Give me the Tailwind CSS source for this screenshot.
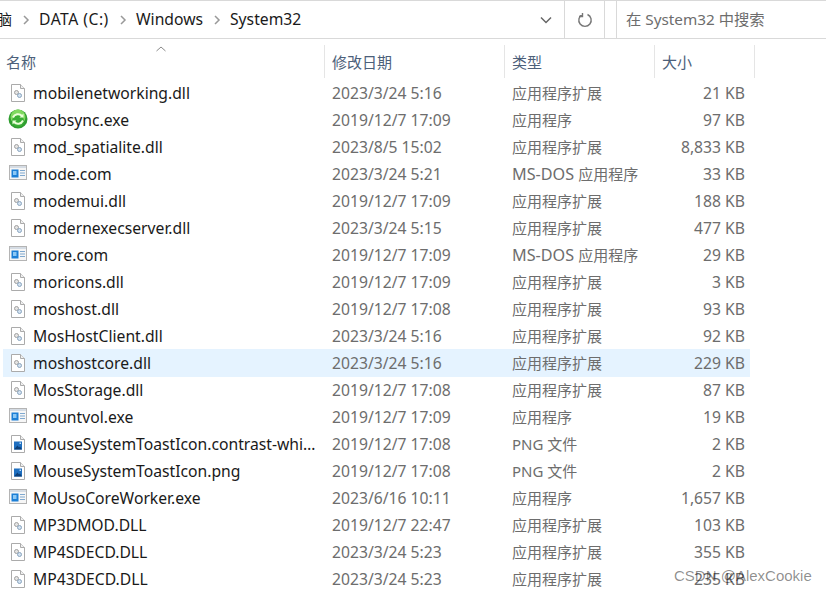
<!DOCTYPE html>
<html lang="zh-CN">
  <head>
    <meta charset="UTF-8" />
    <title>System32</title>
    <script src="https://cdn.jsdelivr.net/npm/@tailwindcss/browser@4"></script>
  </head>
  <body class="bg-white h-[591px] overflow-hidden relative text-[15.7px] text-[#1a1a1a] font-['Noto_Sans','Noto_Sans_CJK_SC',sans-serif]">
    <!-- icon defs -->
    <svg class="absolute w-0 h-0">
      <defs>
        <symbol id="dll" viewBox="0 1 20 20">
          <path d="M3.500 1.500h9l4 4v13h-13z" fill="#fff" stroke="#ababab" />
          <path d="M12.500 1.500v4h4" fill="#f0f0f0" stroke="#ababab" />
          <circle cx="8.500" cy="9.500" r="2" fill="#e4e4e4" stroke="#a0a0a0" />
          <circle cx="11.500" cy="12.500" r="2" fill="#d3e2f0" stroke="#8aa5bf" />
        </symbol>
        <symbol id="app" viewBox="0 2 20 20">
          <rect x="1.500" y="2.500" width="17" height="14" fill="#f6f6f6" stroke="#b4b4b4" />
          <rect x="2" y="3" width="16" height="2" fill="#d5dce4" />
          <rect x="3.500" y="6.500" width="7" height="8" fill="#1c7fd6" />
          <rect x="5" y="8" width="3.500" height="4" fill="#8cc8f5" />
          <path d="M12 7.500h5M12 10h5M12 12.500h5" stroke="#7fa8cf" />
        </symbol>
        <symbol id="png" viewBox="0 1 20 20">
          <path d="M3.500 1.500h9l4 4v13h-13z" fill="#fff" stroke="#ababab" />
          <path d="M12.500 1.500v4h4" fill="#f0f0f0" stroke="#ababab" />
          <rect x="6" y="7.500" width="8" height="8" fill="#1f6fc0" />
          <path d="M6 15.500l3.500-4 1.500 2 1-1 2 3z" fill="#0d3f78" />
          <rect x="11.500" y="8.500" width="1.500" height="1.500" fill="#bfe0fa" />
        </symbol>
        <symbol id="sync" viewBox="0 0 20 20">
          <circle cx="10" cy="10" r="9.500" fill="#2f9e2f" />
          <circle cx="10" cy="8" r="7.500" fill="#7fd95f" />
          <circle cx="10" cy="12" r="6" fill="#3aae35" />
          <path d="M5 8.500a5.500 5.500 0 0 1 9-1.500M15 11.500a5.500 5.500 0 0 1-9 1.500" fill="none" stroke="#eaffd8" stroke-width="2" />
          <path d="M15.500 4.500v4h-4zM4.500 15.500v-4h4z" fill="#eaffd8" />
        </symbol>
      </defs>
    </svg>

    <!-- address bar -->
    <div class="h-[39px] flex border-y border-[#d9d9d9]">
      <div class="w-[605px] shrink-0 flex items-center border-r border-[#d9d9d9] overflow-hidden">
        <div class="w-[565px] shrink-0 h-full flex items-center border-r border-[#d9d9d9] overflow-hidden">
          <span class="w-[12px] overflow-hidden whitespace-nowrap flex justify-end shrink-0 text-[15px]"><span>脑</span></span>
          <svg class="w-[8px] h-[10px] ml-[10px] shrink-0" viewBox="0 0 8 10"><path d="M2 1l4 4-4 4" fill="none" stroke="#999" stroke-width="1.500" /></svg>
          <span class="ml-[9px] w-[70px] shrink-0 tracking-[0.5px] whitespace-nowrap">DATA (C:)</span>
          <svg class="w-[8px] h-[10px] ml-[10px] shrink-0" viewBox="0 0 8 10"><path d="M2 1l4 4-4 4" fill="none" stroke="#999" stroke-width="1.500" /></svg>
          <span class="ml-[9px] w-[67px] shrink-0">Windows</span>
          <svg class="w-[8px] h-[10px] ml-[10px] shrink-0" viewBox="0 0 8 10"><path d="M2 1l4 4-4 4" fill="none" stroke="#999" stroke-width="1.500" /></svg>
          <span class="ml-[9px]">System32</span>
          <svg class="w-[12px] h-[8px] ml-auto mr-[12px] shrink-0" viewBox="0 0 12 8"><path d="M1 1.500l5 5 5-5" fill="none" stroke="#666" stroke-width="1.500" /></svg>
        </div>
        <div class="flex-1 flex justify-center">
          <svg class="w-[16px] h-[16px]" viewBox="0 0 16 16"><path d="M5.500 2.500a6.200 6.200 0 1 0 5 0M5.500 1v3.500H2" fill="none" stroke="#777" stroke-width="1.400" /></svg>
        </div>
      </div>
      <div class="w-[210px] ml-[11px] pl-[9px] flex items-center border-l border-[#d9d9d9] text-[#6d6d6d] whitespace-nowrap text-[15.3px]">在 System32 中搜索</div>
    </div>

    <!-- column headers -->
    <div class="h-[33px] mt-[6px] flex text-[15px] text-[#4c607a] relative">
      <svg class="absolute left-[156px] top-[1px] w-[10px] h-[6px]" viewBox="0 0 10 6"><path d="M0.500 5l4.500-4 4.500 4" fill="none" stroke="#8a8a8a" /></svg>
      <div class="w-[325px] h-full pl-[6px] pt-[2px] flex items-center border-r border-[#e5e5e5]">名称</div>
      <div class="w-[180px] h-full pl-[7px] pt-[2px] flex items-center border-r border-[#e5e5e5]">修改日期</div>
      <div class="w-[150px] h-full pl-[7px] pt-[2px] flex items-center border-r border-[#e5e5e5]">类型</div>
      <div class="w-[100px] h-full pl-[7px] pt-[2px] flex items-center border-r border-[#e5e5e5]">大小</div>
    </div>

    <!-- file rows -->
    <div class="mt-[2px] ml-[3px] w-[747px] text-[#6d6d6d]">
      <div class="h-[27px] flex items-center">
        <svg class="w-[20px] h-[20px] ml-[5px] shrink-0"><use href="#dll" /></svg>
        <span class="w-[304px] pl-[5px] pr-[14px] text-[#1a1a1a] truncate">mobilenetworking.dll</span><span class="w-[180px]">2023/3/24 5:16</span><span class="w-[150px] text-[15px]">应用程序扩展</span><span class="w-[83px] text-right">21 KB</span>
      </div>
      <div class="h-[27px] flex items-center">
        <svg class="w-[20px] h-[20px] ml-[5px] -mt-[4px] shrink-0"><use href="#sync" /></svg>
        <span class="w-[304px] pl-[5px] pr-[14px] text-[#1a1a1a] truncate">mobsync.exe</span><span class="w-[180px]">2019/12/7 17:09</span><span class="w-[150px] text-[15px]">应用程序</span><span class="w-[83px] text-right">97 KB</span>
      </div>
      <div class="h-[27px] flex items-center">
        <svg class="w-[20px] h-[20px] ml-[5px] shrink-0"><use href="#dll" /></svg>
        <span class="w-[304px] pl-[5px] pr-[14px] text-[#1a1a1a] truncate">mod_spatialite.dll</span><span class="w-[180px]">2023/8/5 15:02</span><span class="w-[150px] text-[15px]">应用程序扩展</span><span class="w-[83px] text-right">8,833 KB</span>
      </div>
      <div class="h-[27px] flex items-center">
        <svg class="w-[20px] h-[20px] ml-[5px] shrink-0"><use href="#app" /></svg>
        <span class="w-[304px] pl-[5px] pr-[14px] text-[#1a1a1a] truncate">mode.com</span><span class="w-[180px]">2023/3/24 5:21</span><span class="w-[150px] text-[15px]"><span class="text-[16.2px]">MS-DOS </span>应用程序</span><span class="w-[83px] text-right">33 KB</span>
      </div>
      <div class="h-[27px] flex items-center">
        <svg class="w-[20px] h-[20px] ml-[5px] shrink-0"><use href="#dll" /></svg>
        <span class="w-[304px] pl-[5px] pr-[14px] text-[#1a1a1a] truncate">modemui.dll</span><span class="w-[180px]">2019/12/7 17:09</span><span class="w-[150px] text-[15px]">应用程序扩展</span><span class="w-[83px] text-right">188 KB</span>
      </div>
      <div class="h-[27px] flex items-center">
        <svg class="w-[20px] h-[20px] ml-[5px] shrink-0"><use href="#dll" /></svg>
        <span class="w-[304px] pl-[5px] pr-[14px] text-[#1a1a1a] truncate">modernexecserver.dll</span><span class="w-[180px]">2023/3/24 5:15</span><span class="w-[150px] text-[15px]">应用程序扩展</span><span class="w-[83px] text-right">477 KB</span>
      </div>
      <div class="h-[27px] flex items-center">
        <svg class="w-[20px] h-[20px] ml-[5px] shrink-0"><use href="#app" /></svg>
        <span class="w-[304px] pl-[5px] pr-[14px] text-[#1a1a1a] truncate">more.com</span><span class="w-[180px]">2019/12/7 17:09</span><span class="w-[150px] text-[15px]"><span class="text-[16.2px]">MS-DOS </span>应用程序</span><span class="w-[83px] text-right">29 KB</span>
      </div>
      <div class="h-[27px] flex items-center">
        <svg class="w-[20px] h-[20px] ml-[5px] shrink-0"><use href="#dll" /></svg>
        <span class="w-[304px] pl-[5px] pr-[14px] text-[#1a1a1a] truncate">moricons.dll</span><span class="w-[180px]">2019/12/7 17:09</span><span class="w-[150px] text-[15px]">应用程序扩展</span><span class="w-[83px] text-right">3 KB</span>
      </div>
      <div class="h-[27px] flex items-center">
        <svg class="w-[20px] h-[20px] ml-[5px] shrink-0"><use href="#dll" /></svg>
        <span class="w-[304px] pl-[5px] pr-[14px] text-[#1a1a1a] truncate">moshost.dll</span><span class="w-[180px]">2019/12/7 17:08</span><span class="w-[150px] text-[15px]">应用程序扩展</span><span class="w-[83px] text-right">93 KB</span>
      </div>
      <div class="h-[27px] flex items-center">
        <svg class="w-[20px] h-[20px] ml-[5px] shrink-0"><use href="#dll" /></svg>
        <span class="w-[304px] pl-[5px] pr-[14px] text-[#1a1a1a] truncate">MosHostClient.dll</span><span class="w-[180px]">2023/3/24 5:16</span><span class="w-[150px] text-[15px]">应用程序扩展</span><span class="w-[83px] text-right">92 KB</span>
      </div>
      <div class="h-[28px] -mt-[1px] pt-[1px] flex items-center bg-[#e5f3ff]">
        <svg class="w-[20px] h-[20px] ml-[5px] shrink-0"><use href="#dll" /></svg>
        <span class="w-[304px] pl-[5px] pr-[14px] text-[#1a1a1a] truncate">moshostcore.dll</span><span class="w-[180px]">2023/3/24 5:16</span><span class="w-[150px] text-[15px]">应用程序扩展</span><span class="w-[83px] text-right">229 KB</span>
      </div>
      <div class="h-[27px] flex items-center">
        <svg class="w-[20px] h-[20px] ml-[5px] shrink-0"><use href="#dll" /></svg>
        <span class="w-[304px] pl-[5px] pr-[14px] text-[#1a1a1a] truncate">MosStorage.dll</span><span class="w-[180px]">2019/12/7 17:08</span><span class="w-[150px] text-[15px]">应用程序扩展</span><span class="w-[83px] text-right">87 KB</span>
      </div>
      <div class="h-[27px] flex items-center">
        <svg class="w-[20px] h-[20px] ml-[5px] shrink-0"><use href="#app" /></svg>
        <span class="w-[304px] pl-[5px] pr-[14px] text-[#1a1a1a] truncate">mountvol.exe</span><span class="w-[180px]">2019/12/7 17:09</span><span class="w-[150px] text-[15px]">应用程序</span><span class="w-[83px] text-right">19 KB</span>
      </div>
      <div class="h-[27px] flex items-center">
        <svg class="w-[20px] h-[20px] ml-[5px] shrink-0"><use href="#png" /></svg>
        <span class="w-[304px] pl-[5px] pr-[14px] text-[#1a1a1a] truncate">MouseSystemToastIcon.contrast-white.png</span><span class="w-[180px]">2019/12/7 17:08</span><span class="w-[150px] text-[15px]">PNG 文件</span><span class="w-[83px] text-right">2 KB</span>
      </div>
      <div class="h-[27px] flex items-center">
        <svg class="w-[20px] h-[20px] ml-[5px] shrink-0"><use href="#png" /></svg>
        <span class="w-[304px] pl-[5px] pr-[14px] text-[#1a1a1a] truncate">MouseSystemToastIcon.png</span><span class="w-[180px]">2019/12/7 17:08</span><span class="w-[150px] text-[15px]">PNG 文件</span><span class="w-[83px] text-right">2 KB</span>
      </div>
      <div class="h-[27px] flex items-center">
        <svg class="w-[20px] h-[20px] ml-[5px] shrink-0"><use href="#app" /></svg>
        <span class="w-[304px] pl-[5px] pr-[14px] text-[#1a1a1a] truncate">MoUsoCoreWorker.exe</span><span class="w-[180px]">2023/6/16 10:11</span><span class="w-[150px] text-[15px]">应用程序</span><span class="w-[83px] text-right">1,657 KB</span>
      </div>
      <div class="h-[27px] flex items-center">
        <svg class="w-[20px] h-[20px] ml-[5px] shrink-0"><use href="#dll" /></svg>
        <span class="w-[304px] pl-[5px] pr-[14px] text-[#1a1a1a] truncate">MP3DMOD.DLL</span><span class="w-[180px]">2019/12/7 22:47</span><span class="w-[150px] text-[15px]">应用程序扩展</span><span class="w-[83px] text-right">103 KB</span>
      </div>
      <div class="h-[27px] flex items-center">
        <svg class="w-[20px] h-[20px] ml-[5px] shrink-0"><use href="#dll" /></svg>
        <span class="w-[304px] pl-[5px] pr-[14px] text-[#1a1a1a] truncate">MP4SDECD.DLL</span><span class="w-[180px]">2023/3/24 5:23</span><span class="w-[150px] text-[15px]">应用程序扩展</span><span class="w-[83px] text-right">355 KB</span>
      </div>
      <div class="h-[27px] flex items-center">
        <svg class="w-[20px] h-[20px] ml-[5px] shrink-0"><use href="#dll" /></svg>
        <span class="w-[304px] pl-[5px] pr-[14px] text-[#1a1a1a] truncate">MP43DECD.DLL</span><span class="w-[180px]">2023/3/24 5:23</span><span class="w-[150px] text-[15px]">应用程序扩展</span><span class="w-[83px] text-right">235 KB</span>
      </div>
    </div>

    <!-- watermark -->
    <div class="absolute left-[674px] top-[565px] text-[15px] text-black/45 font-['Liberation_Sans',sans-serif] whitespace-nowrap">CSDN @AlexCookie</div>
  </body>
</html>
